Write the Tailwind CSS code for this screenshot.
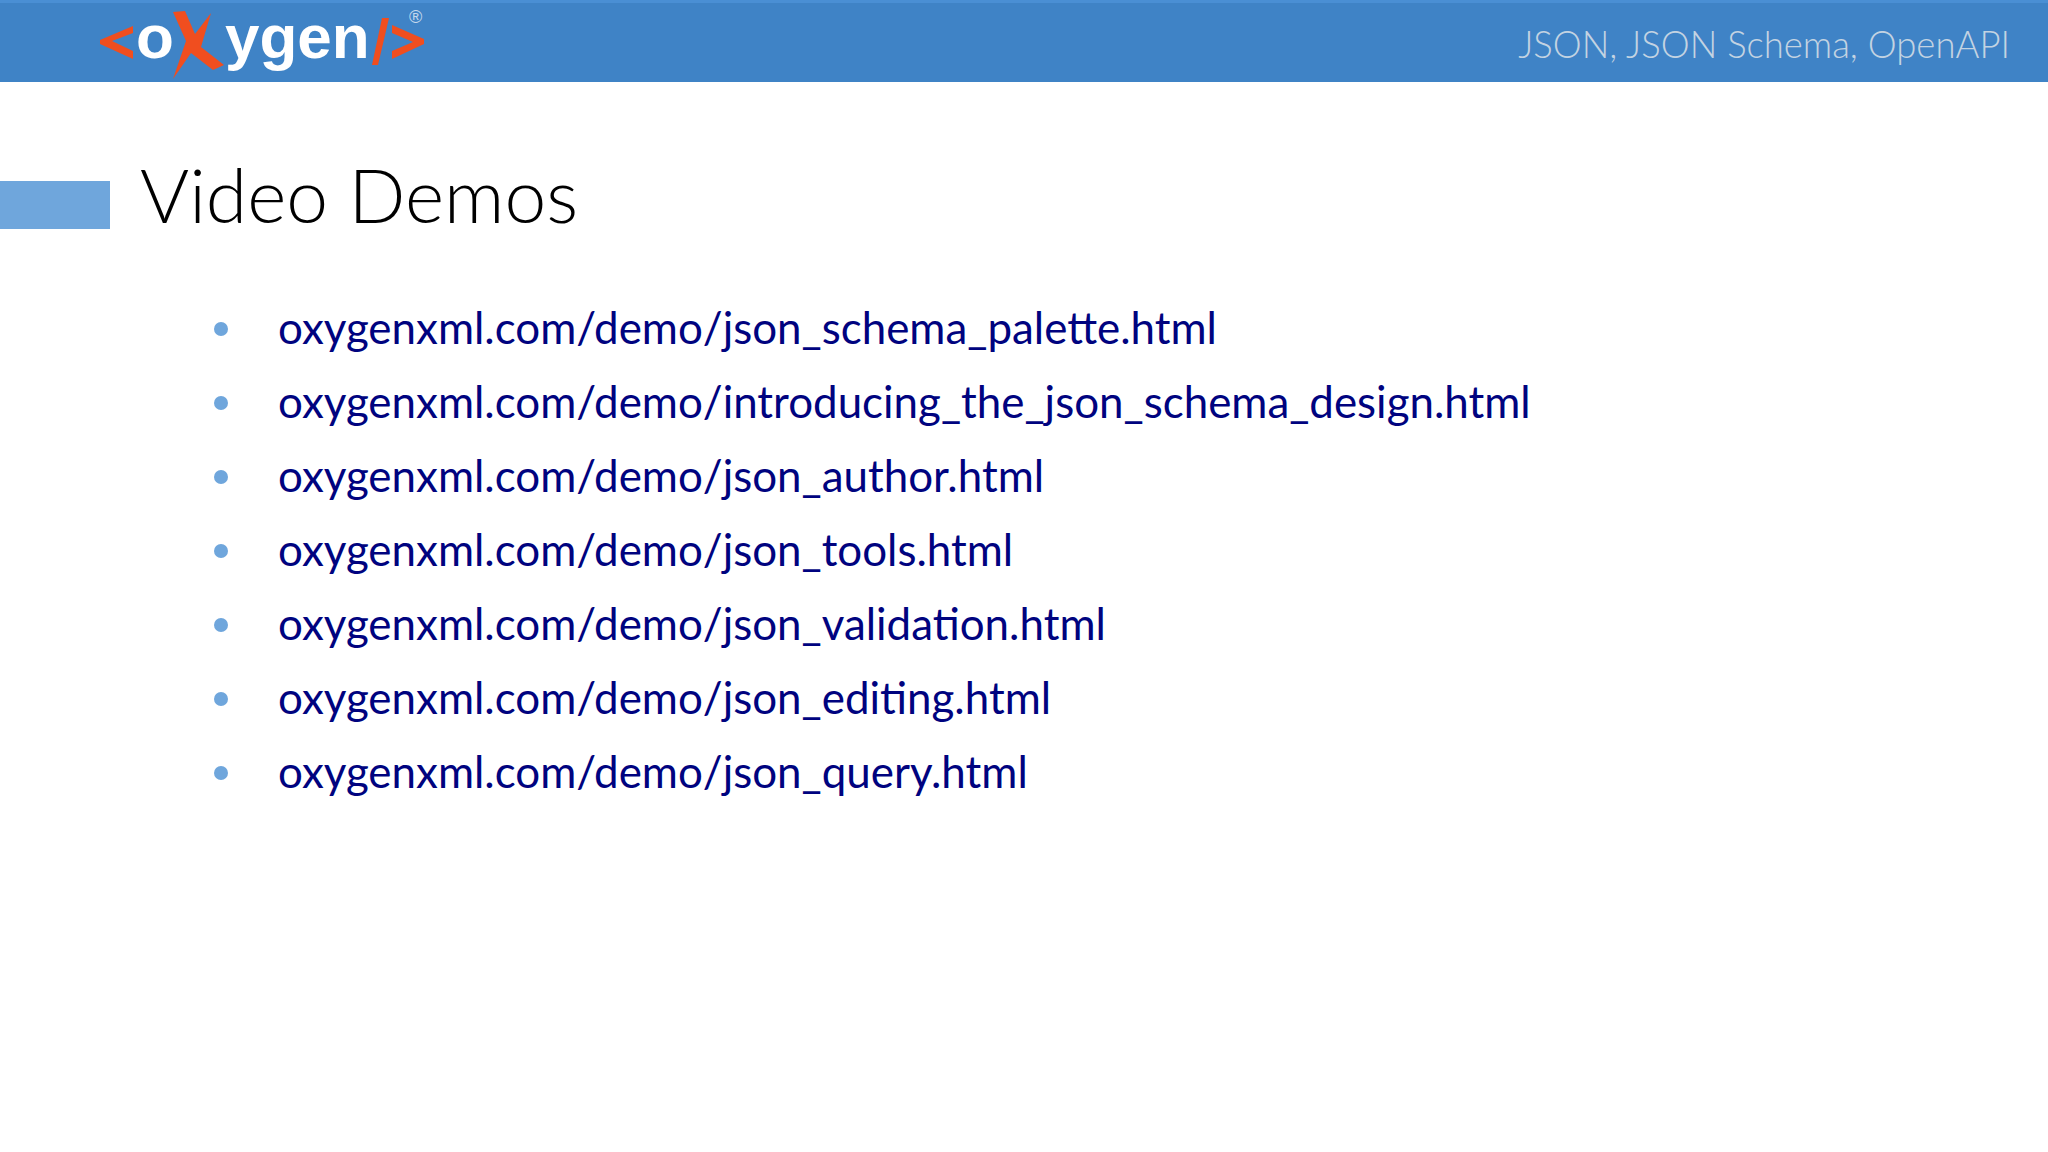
<!DOCTYPE html>
<html><head><meta charset="utf-8"><script src="https://cdn.jsdelivr.net/npm/@tailwindcss/browser@4"></script></head>
<body class="bg-white">
<div class="w-[2048px] h-[1152px] overflow-hidden bg-white font-['Lato',sans-serif] flex flex-col">
  <header class="h-[82px] shrink-0 bg-[#3f83c6] border-t-[3px] border-[#4a8fd4] flex items-center justify-between pl-[98px] pr-[38px]">
    <div class="relative w-[332px] h-[79px]">
      <svg class="absolute left-0 top-0" width="332" height="79" viewBox="0 0 332 79">
        <path d="M2 37 L35 23 L35 30 L14 38 L35 48 L35 56 L2 41 Z" fill="#f04e1f"/>
        <path d="M75 9 L87 8 L97 31 L113 10 L103 44 L126 62 L115 67 L93 50 L75 76 L88 38 Z" fill="#f04e1f"/>
        <path d="M284 15 L291 15 L280 62 L274 62 Z" fill="#f04e1f"/>
        <path d="M294 22 L326 36 L326 41 L294 56 L294 48 L315 39 L294 30 Z" fill="#f04e1f"/>
      </svg>
      <span class="absolute left-[38px] top-[1px] text-[62px] leading-[66px] font-bold text-white font-['Liberation_Sans',sans-serif]">o</span>
      <span class="absolute left-[127px] top-[1px] text-[62px] leading-[66px] font-bold text-white font-['Liberation_Sans',sans-serif]">ygen</span>
      <span class="absolute left-[311px] top-[5px] text-[18px] leading-[18px] text-[#c4d8ec] font-['Liberation_Sans',sans-serif]">®</span>
    </div>
    <div class="text-[36.5px] font-light text-[#c3d3e2] mt-[3px]">JSON, JSON Schema, OpenAPI</div>
  </header>
  <div class="flex items-center mt-[72px] h-[80px]">
    <div class="w-[110px] h-[48px] bg-[#6fa6dc] mt-[22px]"></div>
    <h1 class="ml-[30px] text-[75px] leading-[80px] font-light text-black">Video Demos</h1>
  </div>
  <ul class="mt-[56px] pl-[214px] flex flex-col text-[#00037f] text-[43.9px] leading-[74px]">
    <li class="flex items-center"><span class="w-[14px] h-[14px] rounded-full bg-[#6fa6dc] mt-[4px] mr-[50px]"></span>oxygenxml.com/demo/json_schema_palette.html</li>
    <li class="flex items-center"><span class="w-[14px] h-[14px] rounded-full bg-[#6fa6dc] mt-[4px] mr-[50px]"></span>oxygenxml.com/demo/introducing_the_json_schema_design.html</li>
    <li class="flex items-center"><span class="w-[14px] h-[14px] rounded-full bg-[#6fa6dc] mt-[4px] mr-[50px]"></span>oxygenxml.com/demo/json_author.html</li>
    <li class="flex items-center"><span class="w-[14px] h-[14px] rounded-full bg-[#6fa6dc] mt-[4px] mr-[50px]"></span>oxygenxml.com/demo/json_tools.html</li>
    <li class="flex items-center"><span class="w-[14px] h-[14px] rounded-full bg-[#6fa6dc] mt-[4px] mr-[50px]"></span>oxygenxml.com/demo/json_validation.html</li>
    <li class="flex items-center"><span class="w-[14px] h-[14px] rounded-full bg-[#6fa6dc] mt-[4px] mr-[50px]"></span>oxygenxml.com/demo/json_editing.html</li>
    <li class="flex items-center"><span class="w-[14px] h-[14px] rounded-full bg-[#6fa6dc] mt-[4px] mr-[50px]"></span>oxygenxml.com/demo/json_query.html</li>
  </ul>
</div>
</body></html>
